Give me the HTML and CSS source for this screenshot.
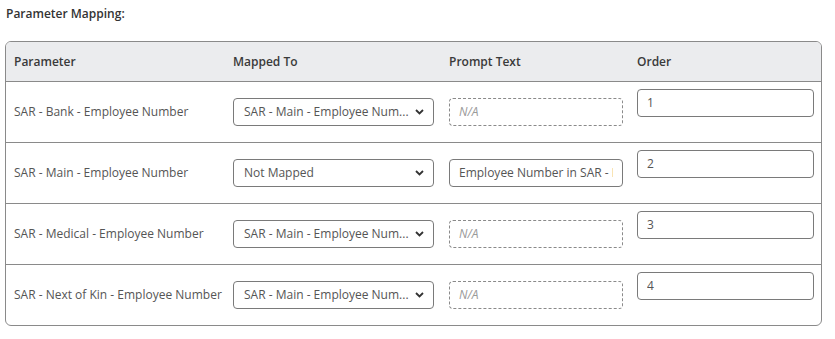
FILE: index.html
```html
<!DOCTYPE html>
<html lang="en">
<head>
  <meta charset="UTF-8">
  <title>Parameter Mapping</title>
  <link rel="stylesheet" href="styles.css">
</head>
<body>

  <div class="section-title">Parameter Mapping:</div>

  <div class="mapping-box">
    <table class="mapping">
      <colgroup>
        <col class="col-param">
        <col class="col-mapped">
        <col class="col-prompt">
        <col class="col-order">
      </colgroup>
      <thead>
        <tr>
          <th>Parameter</th>
          <th>Mapped To</th>
          <th>Prompt Text</th>
          <th>Order</th>
        </tr>
      </thead>
      <tbody>
        <tr>
          <td>SAR - Bank - Employee Number</td>
          <td>
            <div class="select">
              <span class="select-text">SAR - Main - Employee Num...</span>
              <svg class="chevron" width="9" height="6" viewBox="0 0 9 6"><path d="M1 1l3.5 3.5L8 1" fill="none" stroke="#333" stroke-width="1.8"/></svg>
            </div>
          </td>
          <td><input type="text" class="prompt disabled" placeholder="N/A" disabled></td>
          <td class="order-cell"><input type="text" class="order" value="1"></td>
        </tr>
        <tr>
          <td>SAR - Main - Employee Number</td>
          <td>
            <div class="select">
              <span class="select-text">Not Mapped</span>
              <svg class="chevron" width="9" height="6" viewBox="0 0 9 6"><path d="M1 1l3.5 3.5L8 1" fill="none" stroke="#333" stroke-width="1.8"/></svg>
            </div>
          </td>
          <td><input type="text" class="prompt" value="Employee Number in SAR - Main"></td>
          <td class="order-cell"><input type="text" class="order" value="2"></td>
        </tr>
        <tr>
          <td>SAR - Medical - Employee Number</td>
          <td>
            <div class="select">
              <span class="select-text">SAR - Main - Employee Num...</span>
              <svg class="chevron" width="9" height="6" viewBox="0 0 9 6"><path d="M1 1l3.5 3.5L8 1" fill="none" stroke="#333" stroke-width="1.8"/></svg>
            </div>
          </td>
          <td><input type="text" class="prompt disabled" placeholder="N/A" disabled></td>
          <td class="order-cell"><input type="text" class="order" value="3"></td>
        </tr>
        <tr>
          <td>SAR - Next of Kin - Employee Number</td>
          <td>
            <div class="select">
              <span class="select-text">SAR - Main - Employee Num...</span>
              <svg class="chevron" width="9" height="6" viewBox="0 0 9 6"><path d="M1 1l3.5 3.5L8 1" fill="none" stroke="#333" stroke-width="1.8"/></svg>
            </div>
          </td>
          <td><input type="text" class="prompt disabled" placeholder="N/A" disabled></td>
          <td class="order-cell"><input type="text" class="order" value="4"></td>
        </tr>
      </tbody>
    </table>
  </div>

</body>
</html>
```

FILE: styles.css
```css
body {
  margin: 0;
  padding: 6px 5px;
  font-family: "Open Sans", sans-serif;
  font-size: 12px;
  color: #555;
  background: #fff;
}
.section-title {
  margin-left: 1px;
  line-height: 16px;
  font-weight: 600;
  color: #333;
}
.mapping-box {
  margin-top: 19px;
  width: 815px;
  border: 1px solid #8a8a8a;
  border-radius: 6px;
  overflow: hidden;
}
.mapping {
  width: 100%;
  border-collapse: collapse;
  table-layout: fixed;
}
.col-param { width: 219px; }
.col-mapped { width: 216px; }
.col-prompt { width: 188px; }
.mapping thead tr { height: 39px; }
.mapping tbody tr { height: 61px; }
.mapping th {
  padding: 0 8px;
  text-align: left;
  font-weight: 600;
  color: #3a3a3a;
  background: #ebecee;
  border-bottom: 1px solid #8a8a8a;
}
.mapping td {
  padding: 0 0 0 8px;
  vertical-align: middle;
  border-bottom: 1px solid #8a8a8a;
  white-space: nowrap;
}
.mapping tr:last-child td {
  border-bottom: none;
}
.mapping td.order-cell {
  vertical-align: top;
  padding-top: 7px;
}
.select {
  display: flex;
  align-items: center;
  justify-content: space-between;
  box-sizing: border-box;
  width: 201px;
  height: 28px;
  padding: 0 9px 0 10px;
  border: 1px solid #7a7a7a;
  border-radius: 4px;
  color: #555;
}
.chevron {
  display: block;
  margin-top: 1px;
}
input[type="text"] {
  display: block;
  box-sizing: border-box;
  height: 28px;
  margin: 0;
  padding: 0 9px;
  font-family: inherit;
  font-size: 12px;
  color: #555;
  background: #fff;
  border: 1px solid #7a7a7a;
  border-radius: 4px;
  outline: none;
}
.prompt {
  width: 174px;
  padding-right: 3px;
}
.prompt.disabled {
  border-style: dashed;
  border-color: #8a8a8a;
}
.prompt::placeholder {
  color: #9a9a9a;
  font-style: italic;
}
.order {
  width: 177px;
}
```
